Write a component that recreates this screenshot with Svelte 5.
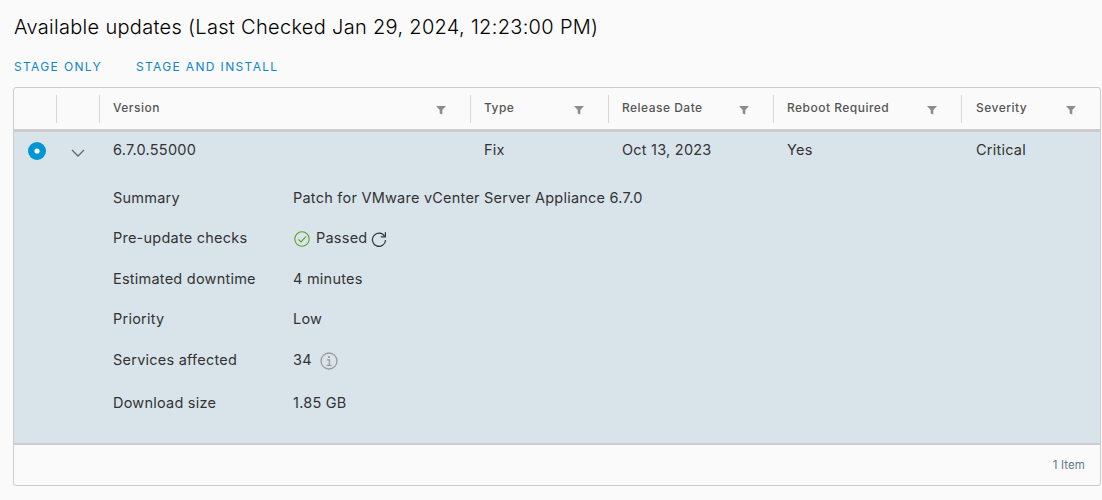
<script lang="ts">
  const columns = ['Version', 'Type', 'Release Date', 'Reboot Required', 'Severity'];
  const row = ['6.7.0.55000', 'Fix', 'Oct 13, 2023', 'Yes', 'Critical'];
</script>

<div class="page">
  <h2 class="title">Available updates (Last Checked Jan 29, 2024, 12:23:00 PM)</h2>

  <div class="actions">
    <button class="link">STAGE ONLY</button>
    <button class="link">STAGE AND INSTALL</button>
  </div>

  <div class="grid">
    <div class="cols head">
      <div class="cell-head"></div>
      <div class="cell-head"></div>
      {#each columns as col}
        <div class="cell-head text">
          <span>{col}</span>
          <svg class="filter" viewBox="0 0 10 10" width="10" height="10">
            <path d="M0 1h10L6.3 5v4.5L3.7 8.5V5z" fill="#8c8c8c" />
          </svg>
        </div>
      {/each}
    </div>

    <div class="body">
      <div class="cols main-row">
        <div class="radio-cell">
          <svg viewBox="0 0 18 18" width="18" height="18">
            <circle cx="9" cy="9" r="9" fill="#0095d3" />
            <circle cx="9" cy="9" r="2.6" fill="#fff" />
          </svg>
        </div>
        <div class="caret-cell">
          <svg viewBox="0 0 14 8" width="14" height="8">
            <path d="M1 1l6 6 6-6" fill="none" stroke="#666" stroke-width="1.3" />
          </svg>
        </div>
        {#each row as val}
          <div class="cell">{val}</div>
        {/each}
      </div>

      <div class="details">
        <div class="label">Summary</div>
        <div class="value">Patch for VMware vCenter Server Appliance 6.7.0</div>

        <div class="label">Pre-update checks</div>
        <div class="value">
          <svg class="check" viewBox="0 0 16 16" width="16" height="16">
            <circle cx="8" cy="8" r="7.2" fill="none" stroke="#5aa220" stroke-width="1.1" />
            <path d="M4.4 8.3l2.6 2.6 4.8-5.2" fill="none" stroke="#5aa220" stroke-width="1.1" />
          </svg>
          <span>Passed</span>
          <svg class="refresh" viewBox="0 0 16 16" width="16" height="16">
            <path d="M13.6 5.2A6.6 6.6 0 1 0 14.6 9" fill="none" stroke="#333" stroke-width="1.2" />
            <path d="M14.4 1.2v4.6H9.8" fill="none" stroke="#333" stroke-width="1.2" />
          </svg>
        </div>

        <div class="label">Estimated downtime</div>
        <div class="value">4 minutes</div>

        <div class="label">Priority</div>
        <div class="value">Low</div>

        <div class="label services">Services affected</div>
        <div class="value services">
          <span>34</span>
          <svg class="info" viewBox="0 0 18 18" width="18" height="18">
            <circle cx="9" cy="9" r="8" fill="none" stroke="#9a9a9a" stroke-width="1.3" />
            <circle cx="9" cy="5" r="1.1" fill="#9a9a9a" />
            <path d="M7 7.8h2.4v5.4M6.6 13.4h5" fill="none" stroke="#9a9a9a" stroke-width="1.3" />
          </svg>
        </div>

        <div class="label last">Download size</div>
        <div class="value last">1.85 GB</div>
      </div>
    </div>

    <div class="footer">1 Item</div>
  </div>
</div>

<style>
  :global(body) {
    margin: 0;
    background: #fafafa;
  }

  .page {
    height: 500px;
    box-sizing: border-box;
    padding: 14px 0 0 13px;
    font-family: Inter, "Open Sans", sans-serif;
    color: #333;
    overflow: hidden;
  }

  .title {
    margin: 0 0 0 1px;
    font-size: 20px;
    line-height: 26px;
    font-weight: 300;
    letter-spacing: 0.31px;
    color: #000;
    white-space: nowrap;
  }

  .actions {
    display: flex;
    gap: 34px;
    margin: 19px 0 13px 1px;
  }

  .link {
    padding: 0;
    border: none;
    background: none;
    font-family: inherit;
    font-size: 12px;
    line-height: 15px;
    letter-spacing: 1.34px;
    color: #0f85c8;
  }

  .grid {
    display: flex;
    flex-direction: column;
    width: 1088px;
    height: 399px;
    box-sizing: border-box;
    border: 1px solid #ccc;
    border-radius: 3px;
    background: #fafafa;
  }

  .cols {
    display: grid;
    grid-template-columns: 43px 43px 371px 138px 165px 188px 1fr;
  }

  .head {
    height: 41px;
    border-bottom: 3px solid #ccc;
    align-items: center;
  }

  .cell-head {
    height: 28px;
    border-right: 1px solid #d7d7d7;
    box-sizing: border-box;
  }

  .cell-head:last-child {
    border-right: none;
  }

  .text {
    display: flex;
    align-items: center;
    justify-content: space-between;
    padding: 0 24px 2px 13px;
    font-size: 12px;
    font-weight: 500;
    letter-spacing: 0.48px;
    color: #565656;
  }

  .text:last-child {
    padding-left: 14px;
    padding-right: 24px;
  }

  .filter {
    margin-top: 4px;
  }

  .body {
    flex: 1;
    background: #d9e4ea;
    border-bottom: 2px solid #ccc;
    font-size: 14.5px;
    letter-spacing: 0.23px;
    color: #333;
  }

  .main-row {
    height: 38px;
    align-items: center;
  }

  .radio-cell {
    display: flex;
    justify-content: center;
    padding-left: 2px;
  }

  .caret-cell {
    display: flex;
    justify-content: center;
    padding: 3px 2px 0 0;
  }

  .cell {
    padding: 0 0 3px 13px;
    white-space: nowrap;
  }

  .cell:last-child {
    padding-left: 14px;
  }

  .details {
    display: grid;
    grid-template-columns: 180px 1fr;
    grid-auto-rows: 40.5px;
    align-items: center;
    padding: 7px 0 0 99px;
  }

  .last {
    padding-top: 5px;
  }

  .services {
    padding-top: 1px;
  }

  .value {
    display: flex;
    align-items: center;
  }

  .check {
    margin: 2px 6px 0 1px;
  }

  .refresh {
    margin: 2px 0 0 4px;
  }

  .info {
    margin: 2px 0 0 8px;
  }

  .footer {
    height: 40px;
    display: flex;
    align-items: center;
    justify-content: flex-end;
    padding-right: 15px;
    font-size: 11.5px;
    letter-spacing: 0.1px;
    color: #5f7a8a;
  }
</style>
